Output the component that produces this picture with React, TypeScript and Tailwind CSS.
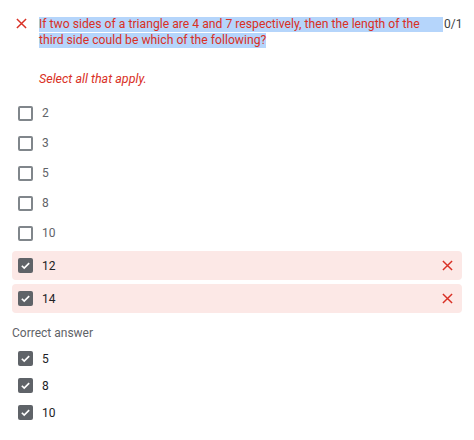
import React from 'react';

const CrossIcon = ({ className }: { className?: string }) => (
  <svg className={className} viewBox="0 0 12 12" fill="none" stroke="currentColor" strokeWidth={1.6}>
    <path d="M1 1l10 10M11 1L1 11" />
  </svg>
);

const Box = ({ checked }: { checked?: boolean }) =>
  checked ? (
    <div className="w-[15px] h-[15px] rounded-[2px] bg-[#5f6368] flex items-center justify-center shrink-0">
      <svg className="w-[11px] h-[11px]" viewBox="0 0 12 12" fill="none" stroke="white" strokeWidth={1.8}>
        <path d="M2 6.3l2.6 2.6L10 3.4" />
      </svg>
    </div>
  ) : (
    <div className="w-[15px] h-[15px] rounded-[2px] border-2 border-[#80868b] shrink-0" />
  );

const options = ['2', '3', '5', '8', '10'];
const wrong = ['12', '14'];
const correct = ['5', '8', '10'];

export default function App() {
  return (
    <div className="w-[474px] h-[440px] bg-white overflow-hidden font-['Roboto',sans-serif]">
      {/* 질문 */}
      <div className="flex pt-[17px]">
        <div className="w-[39px] pl-4 pt-[1px]">
          <CrossIcon className="w-[11px] h-[11px] text-[#d93025]" />
        </div>
        <div className="w-[404px] text-[12.2px] text-[#d93025] whitespace-nowrap">
          <div className="h-[15px] leading-[15px] bg-[#b5d5fb]">
            If two sides of a triangle are 4 and 7 respectively, then the length of the
          </div>
          <div className="mt-[1px] h-[15px] leading-[15px]">
            <span className="bg-[#b5d5fb] inline-block">third side could be which of the following?</span>
          </div>
        </div>
        <div className="pl-[1px] text-[12px] leading-[15px] text-[#3c4043]">0/1</div>
      </div>

      <div className="pl-[39px] mt-[23px] text-[12.5px] leading-[15px] italic text-[#d93025]">
        Select all that apply.
      </div>

      {/* 선택지 */}
      <div className="mt-[12px]">
        {options.map((o) => (
          <div key={o} className="h-[30px] flex items-center pl-[18px] gap-[9px]">
            <Box />
            <span className="text-[12px] text-[#5f6368]">{o}</span>
          </div>
        ))}
      </div>

      <div className="mx-3 mt-[3px] flex flex-col gap-1">
        {wrong.map((o) => (
          <div key={o} className="h-[29px] rounded-[4px] bg-[#fce8e6] flex items-center pl-[6px] pr-[9px] gap-[9px]">
            <Box checked />
            <span className="flex-1 text-[12px] text-[#202124]">{o}</span>
            <CrossIcon className="w-[11px] h-[11px] text-[#d93025]" />
          </div>
        ))}
      </div>

      {/* 정답 */}
      <div className="pl-3 mt-[12px] text-[12px] leading-4 text-[#5f6368]">Correct answer</div>
      <div className="mt-[4px]">
        {correct.map((o) => (
          <div key={o} className="h-[27px] flex items-center pl-[18px] gap-[9px]">
            <Box checked />
            <span className="text-[12px] text-[#202124]">{o}</span>
          </div>
        ))}
      </div>
    </div>
  );
}
